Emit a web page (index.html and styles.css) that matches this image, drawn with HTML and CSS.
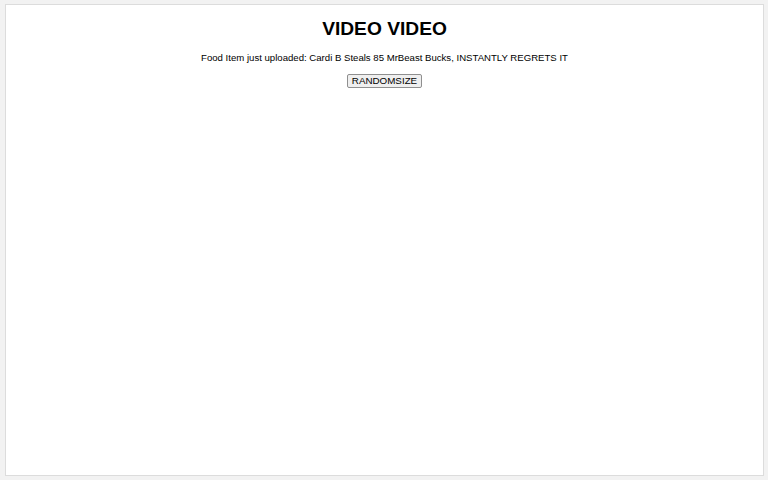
FILE: index.html
```html
<!DOCTYPE html>
<html>
<head>
<meta charset="utf-8">
<link rel="stylesheet" href="styles.css">
</head>
<body>
<div class="frame">
  <h1 class="title">VIDEO VIDEO</h1>
  <p class="caption">Food Item just uploaded: Cardi B Steals 85 MrBeast Bucks, INSTANTLY REGRETS IT</p>
  <button class="btn">RANDOMSIZE</button>
</div>
</body>
</html>
```
FILE: styles.css
```css
html, body { margin: 0; padding: 0; }
body {
  background: #f2f2f2;
  font-family: "Liberation Sans", Arial, sans-serif;
  padding: 4px 4px 4px 5px;
  height: 480px;
  box-sizing: border-box;
}
.frame {
  background: #fff;
  border: 1px solid #dcdcdc;
  height: 472px;
  box-sizing: border-box;
  display: flex;
  flex-direction: column;
  align-items: center;
}
.title {
  font-size: 19.2px;
  font-weight: bold;
  margin: 12px 0 0 0;
  line-height: 23px;
  color: #000;
}
.caption {
  font-size: 9.6px;
  margin: 12px 0 0 0;
  line-height: 12px;
  color: #000;
}
.btn {
  margin-top: 10px;
  font-family: "Liberation Sans", Arial, sans-serif;
  font-size: 9.8px;
  padding: 1px 4px;
  line-height: 10px;
  height: 14px;
  box-sizing: border-box;
  background: #efefef;
  border: 1px solid #8f8f8f;
  border-radius: 2px;
  color: #000;
}
```
